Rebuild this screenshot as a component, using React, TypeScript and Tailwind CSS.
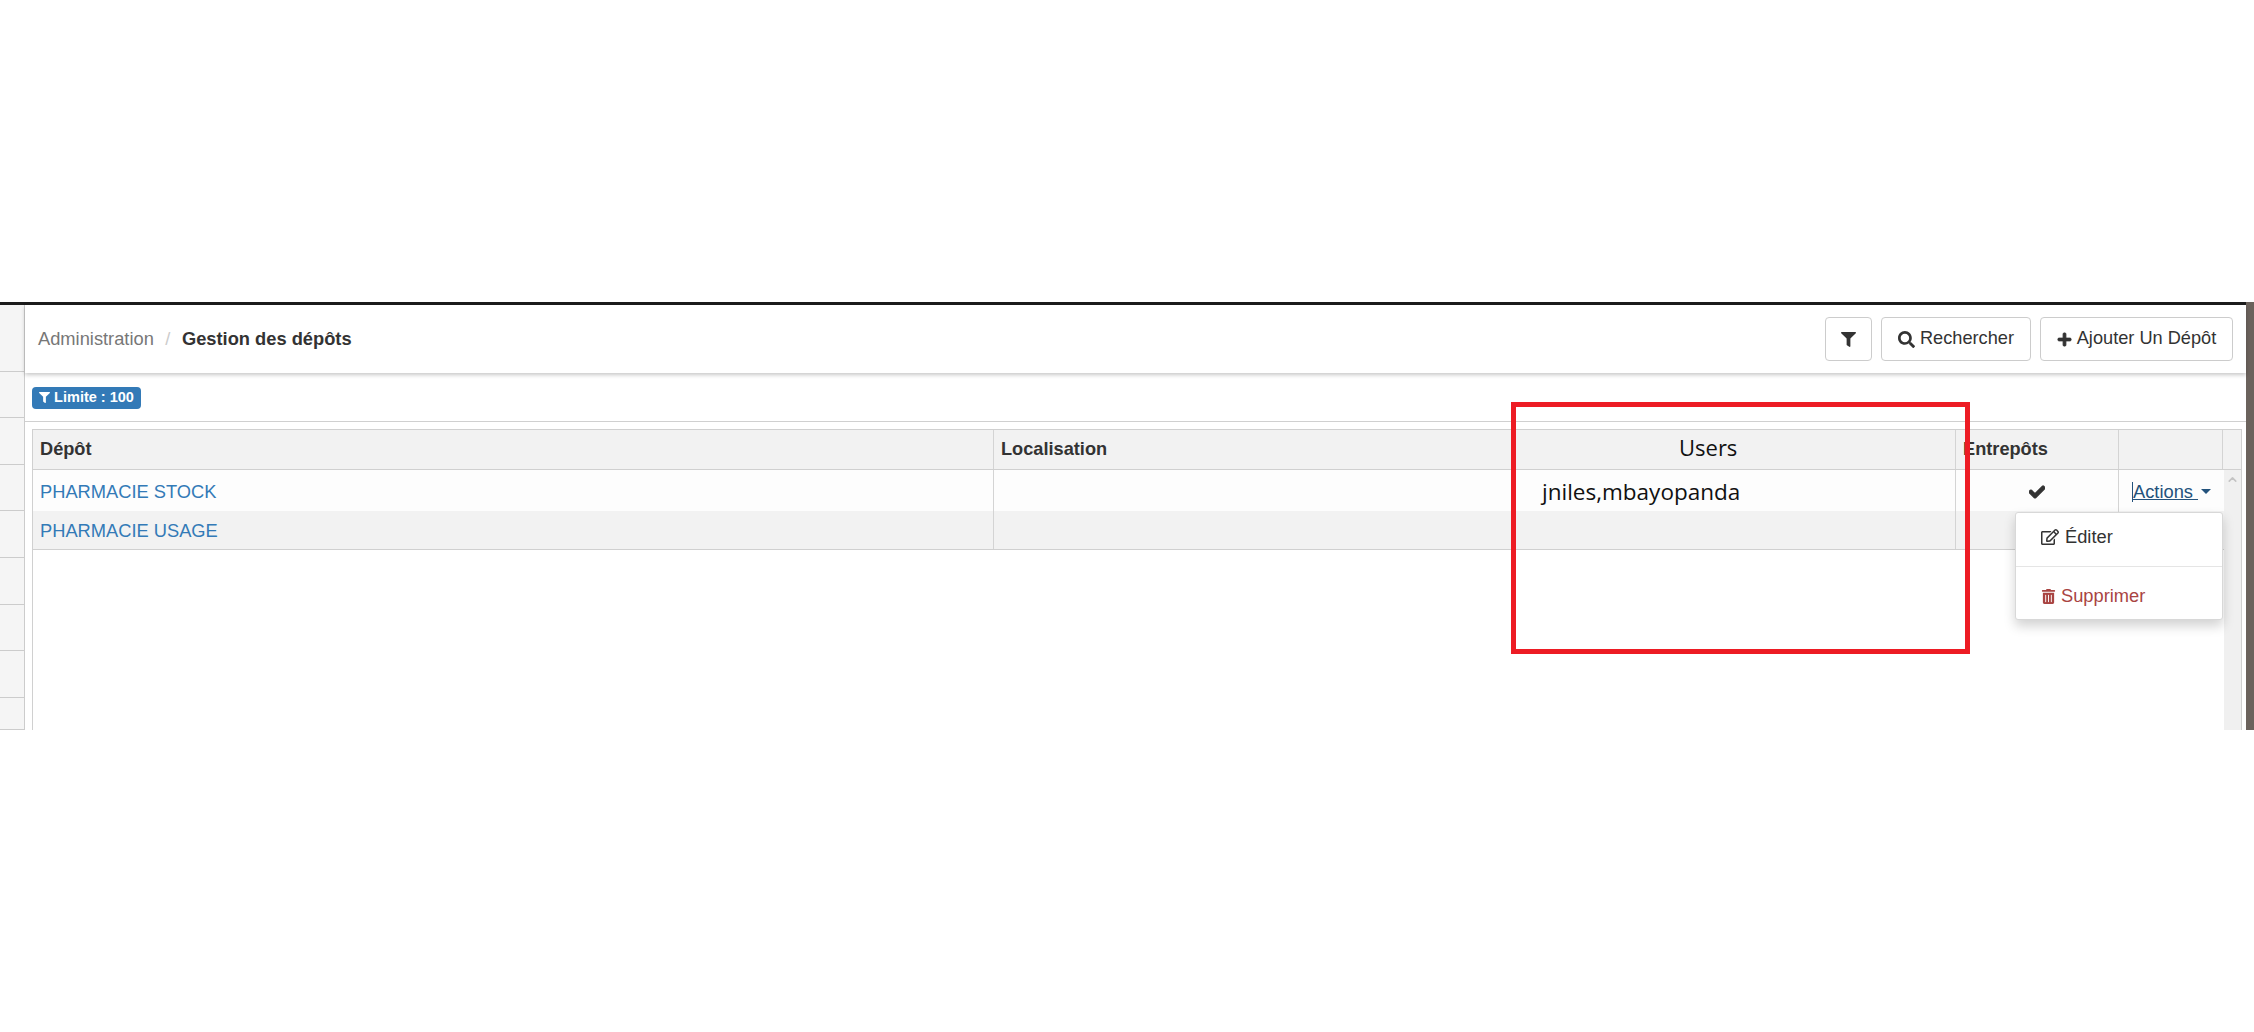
import { FaCheck, FaFilter, FaPlus, FaRegEdit, FaSearch, FaTrashAlt } from 'react-icons/fa';
import { ChevronUp } from 'lucide-react';

const SIDE_ROWS = [67, 46, 47, 46, 47, 47, 46, 47, 32];

function Sidebar() {
  return (
    <div className="flex w-[25px] shrink-0 flex-col border-r border-[#ccc] bg-[#f5f5f5]">
      {SIDE_ROWS.map((h, i) => (
        <div key={i} className="shrink-0 border-b border-[#ccc]" style={{ height: h }} />
      ))}
    </div>
  );
}

function Toolbar() {
  return (
    <div className="relative z-10 flex h-[68px] shrink-0 items-center justify-between pl-[13px] pr-[13px] shadow-[0_2px_4px_rgba(0,0,0,0.22)]">
      <div className="flex items-center text-[18.3px]">
        <span className="text-[#777]">Administration</span>
        <span className="px-[11.5px] text-[#ccc]">/</span>
        <span className="font-bold text-[#333]">Gestion des dépôts</span>
      </div>
      <div className="flex gap-[9px] text-[18.2px] text-[#333]">
        <button className="flex h-[44px] w-[47px] items-center justify-center rounded-[4px] border border-[#ccc]">
          <FaFilter size={15} />
        </button>
        <button className="flex h-[44px] w-[150px] items-center justify-center gap-[5px] rounded-[4px] border border-[#ccc]">
          <FaSearch size={17} />
          Rechercher
        </button>
        <button className="flex h-[44px] w-[193px] items-center justify-center gap-[5px] rounded-[4px] border border-[#ccc]">
          <FaPlus size={15} className="stroke-[30px]" />
          Ajouter Un Dépôt
        </button>
      </div>
    </div>
  );
}

function Cell({ w, children, className = '' }: { w: string; children?: React.ReactNode; className?: string }) {
  return <div className={`flex shrink-0 items-center border-r border-[#d4d4d4] px-[7px] ${w} ${className}`}>{children}</div>;
}

function DepotTable() {
  return (
    <div className="relative ml-[7px] mr-[4px] mt-[7px] flex min-h-0 flex-1 flex-col border-l border-r border-t border-[#d0d0d0]">
      <div className="flex h-[40px] shrink-0 border-b border-[#d0d0d0] bg-[#f2f2f2] text-[18.2px] font-bold text-[#333]">
        <Cell w="w-[961px]">Dépôt</Cell>
        <Cell w="w-[962px]">Localisation</Cell>
        <Cell w="w-[163px]">Entrepôts</Cell>
        <Cell w="w-[104px]" />
      </div>
      <div className="flex min-h-0 flex-1">
        <div className="min-w-0 flex-1">
          <div className="flex h-[41px] bg-[#fdfdfd] text-[18.3px]">
            <Cell w="w-[961px]" className="pt-[3px] text-[#337ab7]">PHARMACIE STOCK</Cell>
            <Cell w="w-[962px]" />
            <Cell w="w-[163px]" className="justify-center pt-[2px] text-[#333]"><FaCheck size={16} className="stroke-[40px]" /></Cell>
            <div className="flex items-center pl-[13px] pt-[2px] text-[#23527c]">
              <span className="whitespace-pre border-l border-[#23527c] leading-[20px] underline">Actions </span>
              <span className="ml-[3px] h-0 w-0 border-x-[5px] border-t-[5px] border-x-transparent border-t-[#23527c]" />
            </div>
          </div>
          <div className="flex h-[39px] border-b border-[#d0d0d0] bg-[#f2f2f2] text-[18.3px]">
            <Cell w="w-[961px]" className="pt-[1px] text-[#337ab7]">PHARMACIE USAGE</Cell>
            <Cell w="w-[962px]" />
            <Cell w="w-[163px]" />
          </div>
        </div>
        <div className="flex w-[17px] shrink-0 justify-center bg-[#f0f0f0] pt-[3px]">
          <ChevronUp size={13} strokeWidth={3} className="text-[#c4c4c4]" />
        </div>
      </div>

      <div className="absolute right-[18px] top-[82px] z-20 flex h-[108px] w-[208px] flex-col rounded-[3px] border border-[#d8d8d8] bg-white text-[18.3px] shadow-[0_6px_12px_rgba(0,0,0,0.18)]">
        <div className="flex h-[53px] items-center gap-[6px] pb-[6px] pl-[25px] text-[#333]">
          <FaRegEdit size={18} />
          Éditer
        </div>
        <div className="h-px bg-[#e5e5e5]" />
        <div className="flex flex-1 items-center gap-[5px] pl-[25px] pt-[6px] text-[#a94442]">
          <FaTrashAlt size={15} />
          Supprimer
        </div>
      </div>
    </div>
  );
}

function UsersNote() {
  return (
    <div className="absolute left-[1511px] top-[402px] z-10 h-[252px] w-[459px] border-[5px] border-[#ed1c24] font-['Open_Sans',sans-serif] text-[22.5px] text-[#111]">
      <div className="absolute left-[163px] top-[25px] text-[22px] leading-[30px]">Users</div>
      <div className="absolute left-[26px] top-[70px] leading-[30px]">jniles,mbayopanda</div>
    </div>
  );
}

export default function App() {
  return (
    <div className="relative h-[1032px] w-[2254px] overflow-hidden bg-white font-['Liberation_Sans',sans-serif]">
      <div className="h-[302px]" />
      <div className="flex h-[428px] border-t-[3px] border-[#1c1c1c]">
        <Sidebar />
        <div className="flex min-w-0 flex-1 flex-col">
          <Toolbar />
          <div className="flex h-[49px] shrink-0 items-center border-b border-[#d0d0d0] pl-[7px] pt-[1px]">
            <span className="flex h-[22px] w-[109px] items-center justify-center gap-[4px] rounded-[4px] bg-[#337ab7] text-[14.5px] font-bold text-white">
              <FaFilter size={11} />
              Limite : 100
            </span>
          </div>
          <DepotTable />
        </div>
        <div className="-mt-[3px] w-[8px] shrink-0 bg-[#6b625c]" />
      </div>
      <UsersNote />
    </div>
  );
}
